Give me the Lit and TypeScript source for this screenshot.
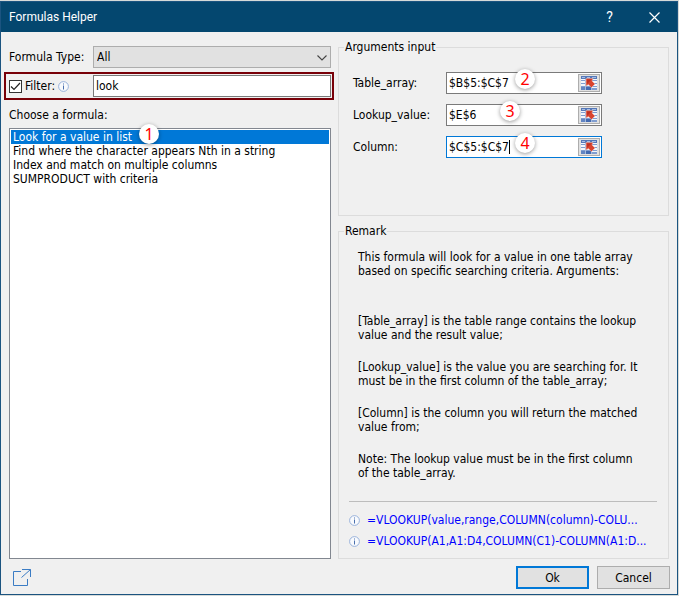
import { LitElement, html, css, svg } from "lit";
import { customElement, state } from "lit/decorators.js";
import { classMap } from "lit/directives/class-map.js";

interface Argument {
  id: string;
  label: string;
  value: string;
  step: number;
  near?: boolean;
  active?: boolean;
}

const FORMULAS = [
  "Look for a value in list",
  "Find where the character appears Nth in a string",
  "Index and match on multiple columns",
  "SUMPRODUCT with criteria",
];

const ARGUMENTS: Argument[] = [
  { id: "table", label: "Table_array:", value: "$B$5:$C$7", step: 2 },
  { id: "lookup", label: "Lookup_value:", value: "$E$6", step: 3, near: true },
  { id: "column", label: "Column:", value: "$C$5:$C$7", step: 4, active: true },
];

const REMARKS = [
  "This formula will look for a value in one table array based on specific searching criteria. Arguments:",
  "[Table_array] is the table range contains the lookup value and the result value;",
  "[Lookup_value] is the value you are searching for. It must be in the first column of the table_array;",
  "[Column] is the column you will return the matched value from;",
  "Note: The lookup value must be in the first column of the table_array.",
];

const EXAMPLES = [
  "=VLOOKUP(value,range,COLUMN(column)-COLU...",
  "=VLOOKUP(A1,A1:D4,COLUMN(C1)-COLUMN(A1:D...",
];

const infoIcon = html`<svg class="info" viewBox="0 0 11 11" aria-hidden="true">
  <circle cx="5.5" cy="5.5" r="4.9" fill="#f8fafd" stroke="#8fabd8" stroke-width="0.9" />
  <path d="M5 2.5h1v1h-1zM5 4.5h1v4h-1z" fill="#4a70ae" />
</svg>`;

const rangeIcon = html`<svg class="range-icon" viewBox="0 0 16 14" aria-hidden="true">
  <rect width="16" height="14" fill="#f2f6fc" />
  <rect width="16" height="3" fill="#5578b8" />
  <path d="M1 1h3v1H1zM6 1h3v1H6zM11 1h4v1h-4z" fill="#a9bee3" />
  ${[4, 7, 10].map((y) => svg`<rect y=${y} width="16" height="1" fill="#7f9dd0" />`)}
  ${[4, 10].map((x) => svg`<rect x=${x} y="3" width="1" height="11" fill="#a5bbdf" />`)}
  <rect x="0" y="11" width="4" height="3" fill="#6285c2" />
  <rect x="5" y="11" width="5" height="3" fill="#456bb0" />
  <rect x="11" y="12" width="5" height="2" fill="#7f9dd0" />
  <path d="M5 2.500h7l-1 2.500 3 3-3.600 3.600-3-3-2.400 1.400z" fill="#d9442f" stroke="#f3c2b6" stroke-width="0.500" />
  <path d="M6 3.500h4.500L6 8z" fill="#c03023" />
</svg>`;

@customElement("app-root")
export class AppRoot extends LitElement {
  @state() private filterOn = true;

  static styles = css`
    :host {
      display: block;
      box-sizing: border-box;
      min-height: 100vh;
      padding: 1px 1px 1px 0;
      background: #d6dad8;
      font: 12px/14px "DejaVu Sans Condensed", "DejaVu Sans", sans-serif;
      color: #000;
    }
    * {
      box-sizing: border-box;
    }
    input,
    select,
    button {
      font: inherit;
      color: inherit;
      margin: 0;
      border-radius: 0;
      outline: none;
    }
    .dialog {
      display: flex;
      flex-direction: column;
      min-height: calc(100vh - 2px);
      border: 1px solid #1b5480;
      background: #f0f0f0;
    }
    .titlebar {
      display: flex;
      align-items: center;
      height: 30px;
      padding-left: 8px;
      background: #04476f;
      color: #fff;
      font: 12px/16px Roboto, "Open Sans", sans-serif;
    }
    .title {
      flex: 1;
      margin: 0;
      font: inherit;
    }
    .title-button {
      display: grid;
      place-items: center;
      width: 45px;
      height: 30px;
      padding: 0;
      border: 0;
      background: none;
      font-size: 14px;
    }
    .title-button svg {
      width: 11px;
      height: 11px;
    }
    .content {
      flex: 1;
      display: grid;
      grid-template-columns: 322fr 331fr;
      gap: 7px;
      padding: 14px 8px 0;
    }
    .left {
      display: flex;
      flex-direction: column;
      min-width: 0;
    }
    .field {
      display: grid;
      grid-template-columns: 84px 1fr;
      align-items: center;
    }
    .type-box {
      position: relative;
      display: grid;
    }
    .type-box select {
      appearance: none;
      width: 100%;
      height: 22px;
      padding: 0 3px;
      border: 1px solid #adadad;
      background: #e1e1e1;
    }
    .chevron {
      position: absolute;
      right: 4px;
      top: 9px;
      width: 10px;
      height: 6px;
      pointer-events: none;
    }
    .filter {
      margin: 4px -3px 0 -5px;
      padding: 1px 1px 1px 3px;
      border: 2px solid #780008;
    }
    .filter-label {
      display: flex;
      align-items: center;
      gap: 3px;
    }
    .filter-label label {
      display: flex;
      align-items: center;
      gap: 3px;
    }
    .check {
      appearance: none;
      width: 13px;
      height: 13px;
      border: 1px solid #333;
      background: #fff;
    }
    .check:checked {
      background: #fff
        url("data:image/svg+xml,%3Csvg xmlns='http://www.w3.org/2000/svg' viewBox='0 0 11 11'%3E%3Cpath d='M1 5.500l3 3 6-6.500' fill='none' stroke='%23222' stroke-width='1.200'/%3E%3C/svg%3E");
    }
    .info {
      flex: none;
      width: 11px;
      height: 11px;
    }
    .text {
      width: 100%;
      min-width: 0;
      height: 22px;
      padding: 0 2px;
      border: 1px solid #7a7a7a;
      background: #fff;
    }
    .list-label {
      margin: 8px 0 6px;
    }
    .list-box {
      position: relative;
      flex: 1;
      display: grid;
    }
    .list {
      appearance: none;
      width: 100%;
      height: 100%;
      padding: 1px;
      border: 1px solid #828790;
      background: #fff;
      overflow: hidden;
    }
    .list option {
      min-height: 14px;
      padding: 0 2px;
      line-height: 14px;
    }
    .list option:checked {
      background: #0078d7 linear-gradient(#0078d7, #0078d7);
      color: #fff;
      -webkit-text-fill-color: #fff;
    }
    .badge {
      position: absolute;
      display: grid;
      place-items: center;
      width: 20px;
      height: 20px;
      border-radius: 50%;
      background: #fff;
      box-shadow: 0 1px 4px rgba(0, 0, 0, 0.4);
      color: #f00;
      font: 16px/20px "Noto Sans", sans-serif;
      pointer-events: none;
    }
    .list-badge {
      left: 130px;
      top: -4px;
    }
    .right {
      display: flex;
      flex-direction: column;
      gap: 8px;
      min-width: 0;
      margin-top: -6px;
    }
    .group {
      min-width: 0;
      margin: 0;
      border: 1px solid #dcdcdc;
    }
    .group legend {
      padding: 0 1px;
    }
    .arguments {
      display: flex;
      flex-direction: column;
      gap: 10px;
      height: 176px;
      padding: 18px 66px 0 6px;
    }
    .arguments legend {
      margin-left: -1px;
    }
    .argument {
      display: grid;
      grid-template-columns: 93px 156px;
      align-items: center;
      padding-left: 8px;
    }
    .range {
      position: relative;
      display: flex;
      height: 22px;
      border: 1px solid #7a7a7a;
      background: #fff;
    }
    .range.active {
      border-color: #0078d7;
    }
    .range input {
      flex: 1;
      min-width: 0;
      padding: 0 2px;
      border: 0;
      background: none;
    }
    .pick {
      display: grid;
      place-items: center;
      width: 22px;
      height: 18px;
      margin: 1px;
      padding: 0;
      border: 1px solid #adadad;
      background: #e1e1e1;
    }
    .range-icon {
      width: 16px;
      height: 14px;
    }
    .range .badge {
      left: 68px;
      top: -4px;
    }
    .range .badge.near {
      left: 53px;
    }
    .caret {
      position: absolute;
      left: 62px;
      top: 3px;
      width: 1px;
      height: 14px;
      background: #000;
    }
    .remark {
      flex: 1;
      padding: 12px 11px 6px 10px;
    }
    .remark legend {
      margin-left: -5px;
    }
    .remark p {
      margin: 0 0 18px;
      padding: 0 14px 0 9px;
    }
    .remark p:first-of-type {
      margin-bottom: 36px;
    }
    .rule {
      margin: 21px 0 11px;
      border: 0;
      border-top: 1px solid #bdbdbd;
    }
    .example {
      display: flex;
      align-items: center;
      gap: 7px;
      white-space: nowrap;
    }
    .example + .example {
      margin-top: 7px;
    }
    .example a {
      color: #00f;
      text-decoration: none;
    }
    .footer {
      display: flex;
      align-items: center;
      gap: 8px;
      padding: 7px 7px 5px 12px;
    }
    .open {
      width: 18px;
      height: 18px;
      margin-right: auto;
      padding: 0;
      border: 0;
      background: none;
    }
    .open svg {
      display: block;
      width: 18px;
      height: 18px;
    }
    .push {
      width: 73px;
      height: 23px;
      padding: 0;
      border: 1px solid #adadad;
      background: #e1e1e1;
    }
    .push.default {
      border: 2px solid #0078d7;
    }
  `;

  private toggleFilter(event: Event) {
    this.filterOn = (event.target as HTMLInputElement).checked;
  }

  private renderArgument(arg: Argument) {
    return html`<div class="argument">
      <label for=${arg.id}>${arg.label}</label>
      <div class=${classMap({ range: true, active: !!arg.active })}>
        <input id=${arg.id} type="text" .value=${arg.value} />
        <button class="pick" type="button" aria-label="Select range">${rangeIcon}</button>
        ${arg.active ? html`<span class="caret"></span>` : null}
        <span class=${classMap({ badge: true, near: !!arg.near })}>${arg.step}</span>
      </div>
    </div>`;
  }

  render() {
    return html`<main class="dialog">
      <header class="titlebar">
        <h1 class="title">Formulas Helper</h1>
        <button class="title-button" type="button">?</button>
        <button class="title-button" type="button" aria-label="Close">
          <svg viewBox="0 0 11 11">
            <path d="M.5 .5l10 10M10.500 .5l-10 10" stroke="#fff" stroke-width="1.200" />
          </svg>
        </button>
      </header>
      <div class="content">
        <section class="left">
          <div class="field">
            <label for="type">Formula Type:</label>
            <div class="type-box">
              <select id="type"><option>All</option></select>
              <svg class="chevron" viewBox="0 0 10 6">
                <path d="M.5 .5L5 5 9.500 .5" fill="none" stroke="#444" stroke-width="1.100" />
              </svg>
            </div>
          </div>
          <div class="field filter">
            <div class="filter-label">
              <label>
                <input class="check" type="checkbox" .checked=${this.filterOn} @change=${this.toggleFilter} />
                Filter:
              </label>
              ${infoIcon}
            </div>
            <input class="text" type="text" aria-label="Filter text" .value=${"look"} />
          </div>
          <label class="list-label" for="formulas">Choose a formula:</label>
          <div class="list-box">
            <select class="list" id="formulas" size="4">
              ${FORMULAS.map((name, i) => html`<option ?selected=${i === 0}>${name}</option>`)}
            </select>
            <span class="badge list-badge">1</span>
          </div>
        </section>
        <section class="right">
          <fieldset class="group arguments">
            <legend>Arguments input</legend>
            ${ARGUMENTS.map((arg) => this.renderArgument(arg))}
          </fieldset>
          <fieldset class="group remark">
            <legend>Remark</legend>
            ${REMARKS.map((text) => html`<p>${text}</p>`)}
            <hr class="rule" />
            ${EXAMPLES.map((text) => html`<div class="example">${infoIcon}<a href="#">${text}</a></div>`)}
          </fieldset>
        </section>
      </div>
      <footer class="footer">
        <button class="open" type="button" aria-label="Open in new window">
          <svg viewBox="0 0 18 18" fill="none" stroke="#3b7cc4">
            <path d="M8 2.500H.5v14h14V10M9 .5h8.500V8M8.500 8.500l9-8" />
          </svg>
        </button>
        <button class="push default" type="button">Ok</button>
        <button class="push" type="button">Cancel</button>
      </footer>
    </main>`;
  }
}
